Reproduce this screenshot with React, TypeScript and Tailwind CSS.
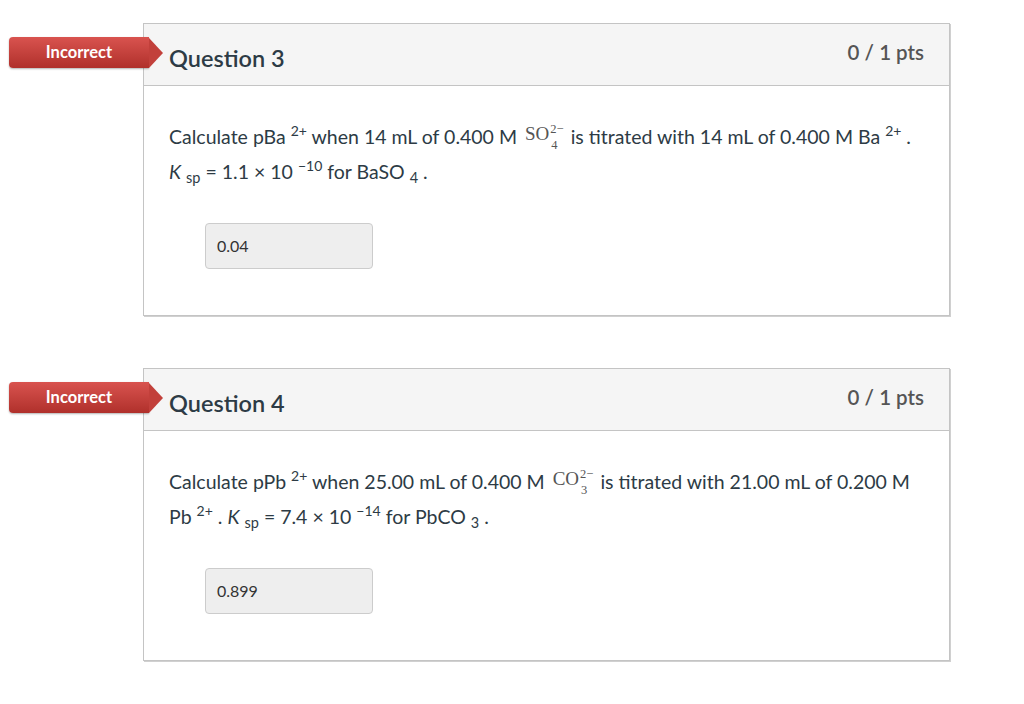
import React from "react";

type Q = {
  title: string;
  answer: string;
  body: React.ReactNode;
};

// ion rendered like the MathML image in the original: serif base with stacked charge / index
function Chem({ base, sub, sup }: { base: string; sub: string; sup: string }) {
  return (
    <span className="inline-flex items-start font-['Liberation_Serif',serif] text-[19px] leading-none text-[#555] ml-[3px] mr-[2px] align-[4px]">
      <span>{base}</span>
      <span className="inline-flex flex-col text-[12.5px] leading-[11px] ml-[1px]">
        <span>{sup}</span>
        <span className="pl-[1px] mt-[5px]">{sub}</span>
      </span>
    </span>
  );
}

function Sup({ children }: { children: React.ReactNode }) {
  return <span className="align-[8px] text-[14px] leading-none">{children}</span>;
}

function Sub({ children }: { children: React.ReactNode }) {
  return <span className="align-[-4px] text-[14.5px] leading-none">{children}</span>;
}

const questions: Q[] = [
  {
    title: "Question 3",
    answer: "0.04",
    body: (
      <>
        Calculate pBa <Sup>2+</Sup> when 14 mL of 0.400 M <Chem base="SO" sup="2−" sub="4" /> is titrated
        with 14 mL of 0.400 M Ba <Sup>2+</Sup> .
        <br />
        <i>K</i> <Sub>sp</Sub> = 1.1 × 10 <Sup>−10</Sup> for BaSO <Sub>4</Sub> .
      </>
    ),
  },
  {
    title: "Question 4",
    answer: "0.899",
    body: (
      <>
        Calculate pPb <Sup>2+</Sup> when 25.00 mL of 0.400 M <Chem base="CO" sup="2−" sub="3" /> is titrated
        with 21.00 mL of 0.200 M
        <br />
        Pb <Sup>2+</Sup> . <i>K</i> <Sub>sp</Sub> = 7.4 × 10 <Sup>−14</Sup> for PbCO <Sub>3</Sub> .
      </>
    ),
  },
];

function Badge() {
  return (
    <div className="absolute left-[-135px] top-[13px] flex items-center">
      <div className="w-[140px] h-[31px] rounded-l-[4px] bg-gradient-to-b from-[#d9534f] to-[#b0302b] flex items-center justify-center text-white text-[16.5px] font-bold shadow-[0_1px_2px_rgba(0,0,0,0.3)]">
        Incorrect
      </div>
      <div className="w-0 h-0 border-y-[15.5px] border-y-transparent border-l-[14px] border-l-[#c2403b]" />
    </div>
  );
}

function QuestionCard({ q }: { q: Q }) {
  return (
    <div className="relative border border-[#c4c4c4] shadow-[1px_1px_0_#d0d0d0] bg-white">
      <Badge />
      <div className="h-[62px] bg-[#f5f5f5] border-b border-[#c4c4c4] flex justify-between px-[25px]">
        <div className="pt-[17px] text-[23.5px] font-semibold text-[#2d3b45]">{q.title}</div>
        <div className="pt-[13px] text-[20.5px] font-semibold text-[#555]">0 / 1 pts</div>
      </div>
      <div className="pl-[25px] pr-[20px] pt-[33px] pb-[46px]">
        <p className="text-[19.5px] leading-[35px] text-[#2d3b45]">{q.body}</p>
        <div className="ml-[36px] mt-[34px] w-[168px] h-[46px] bg-[#eeeeee] border border-[#cccccc] rounded-[4px] flex items-center px-[11px] text-[16px] text-[#333]">
          {q.answer}
        </div>
      </div>
    </div>
  );
}

export default function App() {
  return (
    <div className="min-h-screen bg-white font-['Lato',sans-serif] pt-[23px] pl-[143px] pr-[74px] flex flex-col gap-[52px]">
      {questions.map((q) => (
        <QuestionCard key={q.title} q={q} />
      ))}
    </div>
  );
}
